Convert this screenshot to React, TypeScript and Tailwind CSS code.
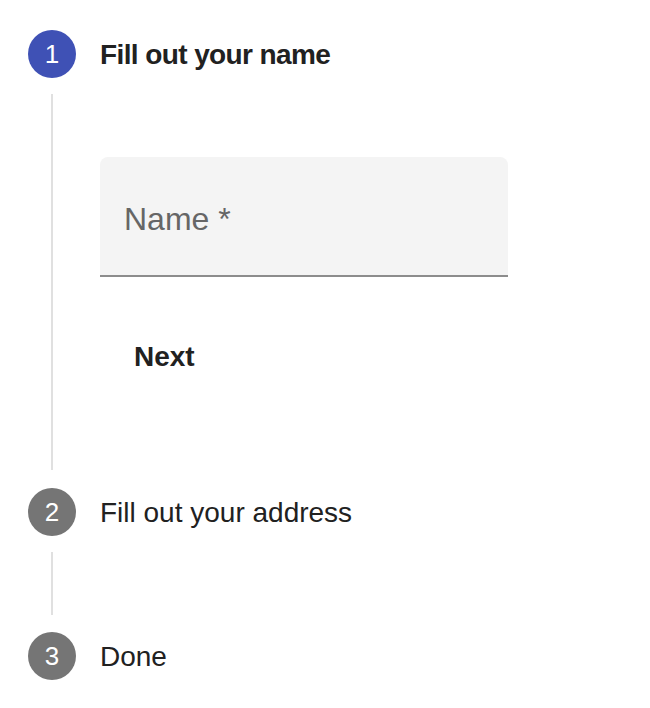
import { FC } from 'react';

const StepCircle: FC<{ n: number; active?: boolean }> = ({ n, active }) => (
  <div
    className={`flex h-12 w-12 shrink-0 items-center justify-center rounded-full text-[26px] text-white ${
      active ? 'bg-[#3f51b5]' : 'bg-[#757575]'
    }`}
  >
    {n}
  </div>
);

const App: FC = () => {
  return (
    <div
      className="min-h-[708px] bg-white pl-[28px] pt-[30px] text-[#212121]"
      style={{ fontFamily: '"Liberation Sans", Arial, sans-serif' }}
    >
      {/* Step 1 */}
      <div className="flex h-12 items-center gap-6">
        <StepCircle n={1} active />
        <span className="pt-[2px] text-[28px] font-bold tracking-[-0.6px]">
          Fill out your name
        </span>
      </div>

      <div className="ml-[23px] mt-4 mb-[18px] h-[376px] border-l-2 border-[#e0e0e0] pl-[47px] pt-[63px]">
        <div className="flex h-[120px] w-[408px] items-center rounded-t-lg border-b-2 border-[#8c8c8c] bg-[#f4f4f4] px-6 pt-[6px]">
          <span className="text-[32px] text-[#666666]">Name *</span>
        </div>
        <button
          type="button"
          className="mt-[44px] ml-[2px] flex h-[72px] items-center px-8 text-[28px] font-bold text-[#212121]"
        >
          Next
        </button>
      </div>

      {/* Step 2 */}
      <div className="flex h-12 items-center gap-6">
        <StepCircle n={2} />
        <span className="pt-[2px] text-[28px]">Fill out your address</span>
      </div>

      <div className="ml-[23px] mt-4 mb-[17px] h-[63px] border-l-2 border-[#e0e0e0]" />

      {/* Step 3 */}
      <div className="flex h-12 items-center gap-6">
        <StepCircle n={3} />
        <span className="pt-[2px] text-[28px]">Done</span>
      </div>
    </div>
  );
};

export default App;
